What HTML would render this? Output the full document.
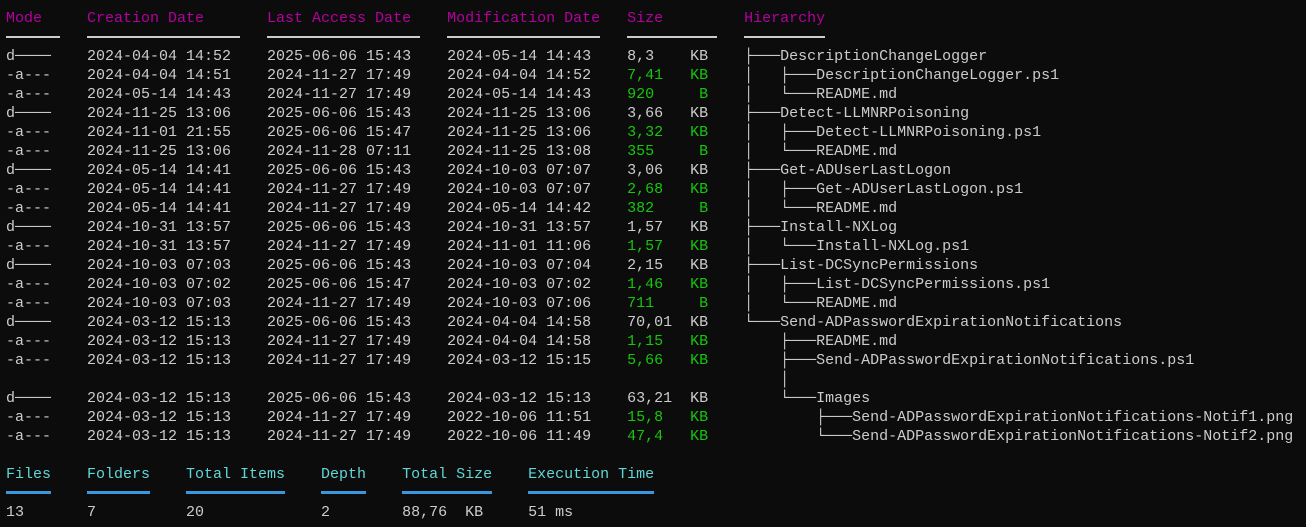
<!DOCTYPE html>
<html><head><meta charset="utf-8"><style>
html,body{margin:0;padding:0;background:#0c0c0c;width:1306px;height:527px;overflow:hidden}
pre{position:absolute;left:6px;top:9px;margin:0;font-family:"Liberation Mono","DejaVu Sans Mono",monospace;font-size:15px;line-height:19px;color:#cccccc;white-space:pre}
.m{color:#b4009e}.g{color:#16c60c}.c{color:#61d6d6}
.u{position:absolute;height:2px;background:#cccccc;top:36px}
.b{position:absolute;height:3px;background:#3a96dd;top:491px}
</style></head><body>
<pre><span class="m">Mode     Creation Date       Last Access Date    Modification Date   Size         Hierarchy</span>

d────    2024-04-04 14:52    2025-06-06 15:43    2024-05-14 14:43    8,3    KB    ├───DescriptionChangeLogger
-a---    2024-04-04 14:51    2024-11-27 17:49    2024-04-04 14:52    <span class="g">7,41   KB</span>    │   ├───DescriptionChangeLogger.ps1
-a---    2024-05-14 14:43    2024-11-27 17:49    2024-05-14 14:43    <span class="g">920     B</span>    │   └───README.md
d────    2024-11-25 13:06    2025-06-06 15:43    2024-11-25 13:06    3,66   KB    ├───Detect-LLMNRPoisoning
-a---    2024-11-01 21:55    2025-06-06 15:47    2024-11-25 13:06    <span class="g">3,32   KB</span>    │   ├───Detect-LLMNRPoisoning.ps1
-a---    2024-11-25 13:06    2024-11-28 07:11    2024-11-25 13:08    <span class="g">355     B</span>    │   └───README.md
d────    2024-05-14 14:41    2025-06-06 15:43    2024-10-03 07:07    3,06   KB    ├───Get-ADUserLastLogon
-a---    2024-05-14 14:41    2024-11-27 17:49    2024-10-03 07:07    <span class="g">2,68   KB</span>    │   ├───Get-ADUserLastLogon.ps1
-a---    2024-05-14 14:41    2024-11-27 17:49    2024-05-14 14:42    <span class="g">382     B</span>    │   └───README.md
d────    2024-10-31 13:57    2025-06-06 15:43    2024-10-31 13:57    1,57   KB    ├───Install-NXLog
-a---    2024-10-31 13:57    2024-11-27 17:49    2024-11-01 11:06    <span class="g">1,57   KB</span>    │   └───Install-NXLog.ps1
d────    2024-10-03 07:03    2025-06-06 15:43    2024-10-03 07:04    2,15   KB    ├───List-DCSyncPermissions
-a---    2024-10-03 07:02    2025-06-06 15:47    2024-10-03 07:02    <span class="g">1,46   KB</span>    │   ├───List-DCSyncPermissions.ps1
-a---    2024-10-03 07:03    2024-11-27 17:49    2024-10-03 07:06    <span class="g">711     B</span>    │   └───README.md
d────    2024-03-12 15:13    2025-06-06 15:43    2024-04-04 14:58    70,01  KB    └───Send-ADPasswordExpirationNotifications
-a---    2024-03-12 15:13    2024-11-27 17:49    2024-04-04 14:58    <span class="g">1,15   KB</span>        ├───README.md
-a---    2024-03-12 15:13    2024-11-27 17:49    2024-03-12 15:15    <span class="g">5,66   KB</span>        ├───Send-ADPasswordExpirationNotifications.ps1
                                                                                      │
d────    2024-03-12 15:13    2025-06-06 15:43    2024-03-12 15:13    63,21  KB        └───Images
-a---    2024-03-12 15:13    2024-11-27 17:49    2022-10-06 11:51    <span class="g">15,8   KB</span>            ├───Send-ADPasswordExpirationNotifications-Notif1.png
-a---    2024-03-12 15:13    2024-11-27 17:49    2022-10-06 11:49    <span class="g">47,4   KB</span>            └───Send-ADPasswordExpirationNotifications-Notif2.png

<span class="c">Files    Folders    Total Items    Depth    Total Size    Execution Time</span>

13       7          20             2        88,76  KB     51 ms</pre>
<div class="u" style="left:6px;width:54px"></div>
<div class="u" style="left:87px;width:153px"></div>
<div class="u" style="left:267px;width:153px"></div>
<div class="u" style="left:447px;width:153px"></div>
<div class="u" style="left:627px;width:90px"></div>
<div class="u" style="left:744px;width:81px"></div>
<div class="b" style="left:6px;width:45px"></div>
<div class="b" style="left:87px;width:63px"></div>
<div class="b" style="left:186px;width:99px"></div>
<div class="b" style="left:321px;width:45px"></div>
<div class="b" style="left:402px;width:90px"></div>
<div class="b" style="left:528px;width:126px"></div>
</body></html>
